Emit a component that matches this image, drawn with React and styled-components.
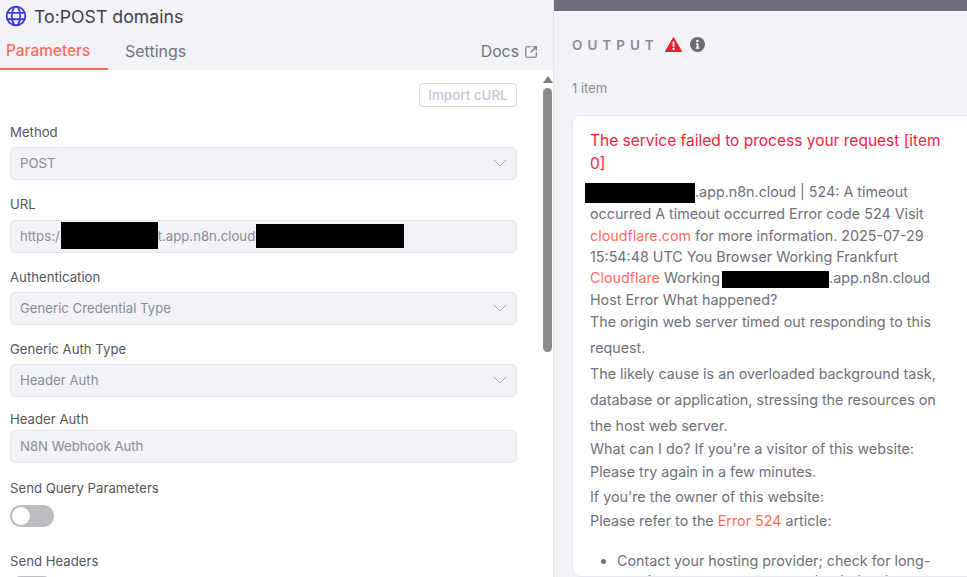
import React from 'react';
import styled, { createGlobalStyle } from 'styled-components';
import { ChevronDown, SquareArrowOutUpRight } from 'lucide-react';

const GlobalStyle = createGlobalStyle`
  html, body {
    margin: 0;
    padding: 0;
    height: 577px;
    overflow: hidden;
    background: #f2f3f8;
    font-family: "Inter", "Liberation Sans", sans-serif;
    color: #6f7079;
  }
  * { box-sizing: border-box; }
`;

const Page = styled.div`
  display: flex;
  width: 967px;
  height: 577px;
  overflow: hidden;
`;

const LeftPanel = styled.div`
  width: 554px;
  flex: none;
  display: flex;
  flex-direction: column;
  height: 577px;
  border-right: 1px solid #e4e5ec;
`;

const PanelHeader = styled.div`
  height: 70px;
  flex: none;
  background: #f2f3f8;
`;

const TitleRow = styled.div`
  display: flex;
  align-items: center;
  gap: 7px;
  height: 32px;
  padding-left: 5px;
`;

const Title = styled.div`
  font-size: 17.7px;
  color: #3f3f46;
`;

const Tabs = styled.div`
  display: flex;
  height: 38px;
  align-items: flex-start;
`;

const Tab = styled.div`
  width: ${p => p.$width}px;
  height: 38px;
  padding: 10px 0 0 ${p => p.$pad}px;
  font-size: ${p => (p.$active ? 15.4 : 16)}px;
  line-height: 18px;
  font-weight: ${p => (p.$active ? 500 : 400)};
  color: ${p => (p.$active ? '#ff6d5a' : '#72737c')};
  border-bottom: ${p => (p.$active ? '2px solid #ff6d5a' : 'none')};
`;

const Docs = styled.div`
  margin-left: auto;
  padding: 11px 15px 0 0;
  display: flex;
  align-items: center;
  gap: 5px;
  font-size: 15.8px;
  line-height: 18px;
  color: #72737c;
`;

const Body = styled.div`
  flex: 1;
  display: flex;
  background: #fff;
  min-height: 0;
`;

const Form = styled.div`
  width: 541px;
  flex: none;
  padding: 13px 24px 0 10px;
`;

const ImportRow = styled.div`
  display: flex;
  justify-content: flex-end;
  height: 24px;
  margin-bottom: 17px;
`;

const ImportButton = styled.div`
  width: 98px;
  height: 24px;
  border: 1px solid #d9dbe6;
  border-radius: 4px;
  font-size: 13.4px;
  font-weight: 500;
  color: #c3c6d6;
  display: flex;
  align-items: center;
  justify-content: center;
`;

const Field = styled.div`
  height: ${p => p.$height}px;
`;

const Label = styled.div`
  font-size: 13.2px;
  line-height: 16px;
  height: ${p => p.$height || 23}px;
  color: #55565e;
`;

const Control = styled.div`
  width: 507px;
  height: 33px;
  background: #f2f3f8;
  border: 1px solid #e3e5ef;
  border-radius: 5px;
  padding: 0 9px 2px;
  display: flex;
  align-items: center;
  justify-content: space-between;
  font-size: 13.2px;
  color: #8a8b94;
  overflow: hidden;
  white-space: nowrap;
`;

const Chevron = styled(ChevronDown)`
  margin-right: -5px;
  flex: none;
`;

const Redacted = styled.span`
  display: inline-block;
  background: #000;
  width: ${p => p.$width}px;
  height: ${p => p.$height}px;
  margin-left: ${p => p.$left || 0}px;
  vertical-align: middle;
`;

const UrlText = styled.span`
  display: flex;
  align-items: center;
`;

const Switch = styled.div`
  width: 44px;
  height: 22px;
  border-radius: 11px;
  background: #bcbdc3;
  padding: 2px;
  margin-top: ${p => p.$top}px;

  &::before {
    content: '';
    display: block;
    width: 18px;
    height: 18px;
    border-radius: 50%;
    background: #fff;
  }
`;

const ScrollTrack = styled.div`
  width: 12px;
  flex: none;
  padding-left: 1px;
  display: flex;
  flex-direction: column;
  align-items: center;
`;

const ScrollArrow = styled.div`
  width: 0;
  height: 0;
  margin-top: 6px;
  border-left: 5px solid transparent;
  border-right: 5px solid transparent;
  border-bottom: 7px solid #7d7d7d;
`;

const ScrollThumb = styled.div`
  width: 9px;
  height: 264px;
  margin-top: 5px;
  border-radius: 5px;
  background: #8b8b8b;
`;

const RightPanel = styled.div`
  flex: 1;
  min-width: 0;
  height: 577px;
  display: flex;
  flex-direction: column;
`;

const TopStrip = styled.div`
  height: 11px;
  flex: none;
  background: #6f6e7a;
`;

const OutputHead = styled.div`
  display: flex;
  align-items: center;
  height: 67px;
  padding: 0 0 0 18px;
`;

const OutputTitle = styled.div`
  font-size: 13.5px;
  font-weight: 600;
  letter-spacing: 5px;
  color: #8b8c94;
  margin-right: 6px;
`;

const ItemCount = styled.div`
  font-size: 13px;
  line-height: 18px;
  margin: 1px 0 18px 18px;
  color: #8b8c94;
`;

const Card = styled.div`
  margin-left: 18px;
  width: 420px;
  flex: 1;
  background: #fff;
  border: 1px solid #e6e7ee;
  border-radius: 8px;
  padding: 13px 32px 0 17px;
  overflow: hidden;
`;

const ErrorTitle = styled.div`
  font-size: 15.5px;
  font-weight: 400;
  line-height: 23px;
  color: #f0233f;
  margin-bottom: 6px;
`;

const Para = styled.p`
  margin: 0;
  font-size: 14.3px;
  line-height: ${p => p.$line || 21.4}px;
  color: #6f7079;
  margin-top: ${p => p.$top || 0}px;
  margin-left: ${p => p.$shift || 0}px;
`;

const Link = styled.span`
  color: #ff6d5a;
`;

const Bullets = styled.ul`
  margin: 19px 0 0;
  padding-left: 27px;
  font-size: 14.3px;
  line-height: 20px;
  color: #6f7079;
`;

const GlobeIcon = () => (
  <svg width="22" height="22" viewBox="0 0 24 24" fill="none" stroke="#3d3fd9" strokeWidth="2">
    <circle cx="12" cy="12" r="10.2" />
    <ellipse cx="12" cy="12" rx="4.6" ry="10.2" />
    <path d="M2 8.5h20M2 15.5h20" />
  </svg>
);

const WarningIcon = () => (
  <svg width="17" height="15" viewBox="0 0 17 15" style={{ marginRight: 8 }}>
    <path d="M8.5 0.5 L16.6 14.5 H0.4 Z" fill="#ea1f30" stroke="#ea1f30" strokeLinejoin="round" />
    <rect x="7.6" y="4.6" width="1.9" height="5.2" rx="0.5" fill="#fff" />
    <circle cx="8.5" cy="11.9" r="1.1" fill="#fff" />
  </svg>
);

const InfoIcon = () => (
  <svg width="15" height="15" viewBox="0 0 15 15">
    <circle cx="7.5" cy="7.5" r="7.5" fill="#696a72" />
    <circle cx="7.5" cy="4" r="1.3" fill="#fff" />
    <path d="M5.9 6.3h2.6v4.3h0.9v1.2H5.8v-1.2h0.9V7.5h-0.8z" fill="#fff" />
  </svg>
);

const SelectField = ({ label, value, height, labelHeight }) => (
  <Field $height={height}>
    <Label $height={labelHeight}>{label}</Label>
    <Control>
      {value}
      <Chevron size={24} color="#a5a6b0" strokeWidth={1} />
    </Control>
  </Field>
);

export default function App() {
  return (
    <Page>
      <GlobalStyle />
      <LeftPanel>
        <PanelHeader>
          <TitleRow>
            <GlobeIcon />
            <Title>To:POST domains</Title>
          </TitleRow>
          <Tabs>
            <Tab $active $width={108} $pad={6}>Parameters</Tab>
            <Tab $width={100} $pad={17}>Settings</Tab>
            <Docs>
              Docs
              <SquareArrowOutUpRight size={14} color="#72737c" strokeWidth={2} />
            </Docs>
          </Tabs>
        </PanelHeader>
        <Body>
          <Form>
            <ImportRow>
              <ImportButton>Import cURL</ImportButton>
            </ImportRow>
            <SelectField label="Method" value="POST" height={72} />
            <Field $height={73}>
              <Label $height={24}>URL</Label>
              <Control>
                <UrlText>
                  https:/
                  <Redacted $width={97} $height={27} $left={1} />
                  t.app.n8n.cloud
                  <Redacted $width={148} $height={24} $left={1} />
                </UrlText>
              </Control>
            </Field>
            <SelectField label="Authentication" value="Generic Credential Type" height={72} />
            <SelectField label="Generic Auth Type" value="Header Auth" height={70} />
            <Field $height={69}>
              <Label $height={19}>Header Auth</Label>
              <Control>N8N Webhook Auth</Control>
            </Field>
            <Field $height={73}>
              <Label>Send Query Parameters</Label>
              <Switch $top={2} />
            </Field>
            <Field $height={30}>
              <Label>Send Headers</Label>
              <Switch $top={0} />
            </Field>
          </Form>
          <ScrollTrack>
            <ScrollArrow />
            <ScrollThumb />
          </ScrollTrack>
        </Body>
      </LeftPanel>
      <RightPanel>
        <TopStrip />
        <OutputHead>
          <OutputTitle>OUTPUT</OutputTitle>
          <WarningIcon />
          <InfoIcon />
        </OutputHead>
        <ItemCount>1 item</ItemCount>
        <Card>
          <ErrorTitle>The service failed to process your request [item 0]</ErrorTitle>
          <Para $shift={-5}>
            <Redacted $width={110} $height={20} />.app.n8n.cloud | 524: A timeout
          </Para>
          <Para>occurred A timeout occurred Error code 524 Visit</Para>
          <Para><Link>cloudflare.com</Link> for more information. 2025-07-29</Para>
          <Para>15:54:48 UTC You Browser Working Frankfurt</Para>
          <Para>
            <Link>Cloudflare</Link> Working<Redacted $width={107} $height={17} $left={2} />.app.n8n.cloud
          </Para>
          <Para>Host Error What happened?</Para>
          <Para $line={26} $top={-1}>The origin web server timed out responding to this request.</Para>
          <Para $line={26}>
            The likely cause is an overloaded background task, database or application, stressing the resources on the host web server.
          </Para>
          <Para $line={23} $top={-2}>What can I do? If you're a visitor of this website:</Para>
          <Para $line={23}>Please try again in a few minutes.</Para>
          <Para $line={25} $top={1}>If you're the owner of this website:</Para>
          <Para $line={23}>Please refer to the <Link>Error 524</Link> article:</Para>
          <Bullets>
            <li>Contact your hosting provider; check for long-running processes or an overloaded web server.</li>
          </Bullets>
        </Card>
      </RightPanel>
    </Page>
  );
}
